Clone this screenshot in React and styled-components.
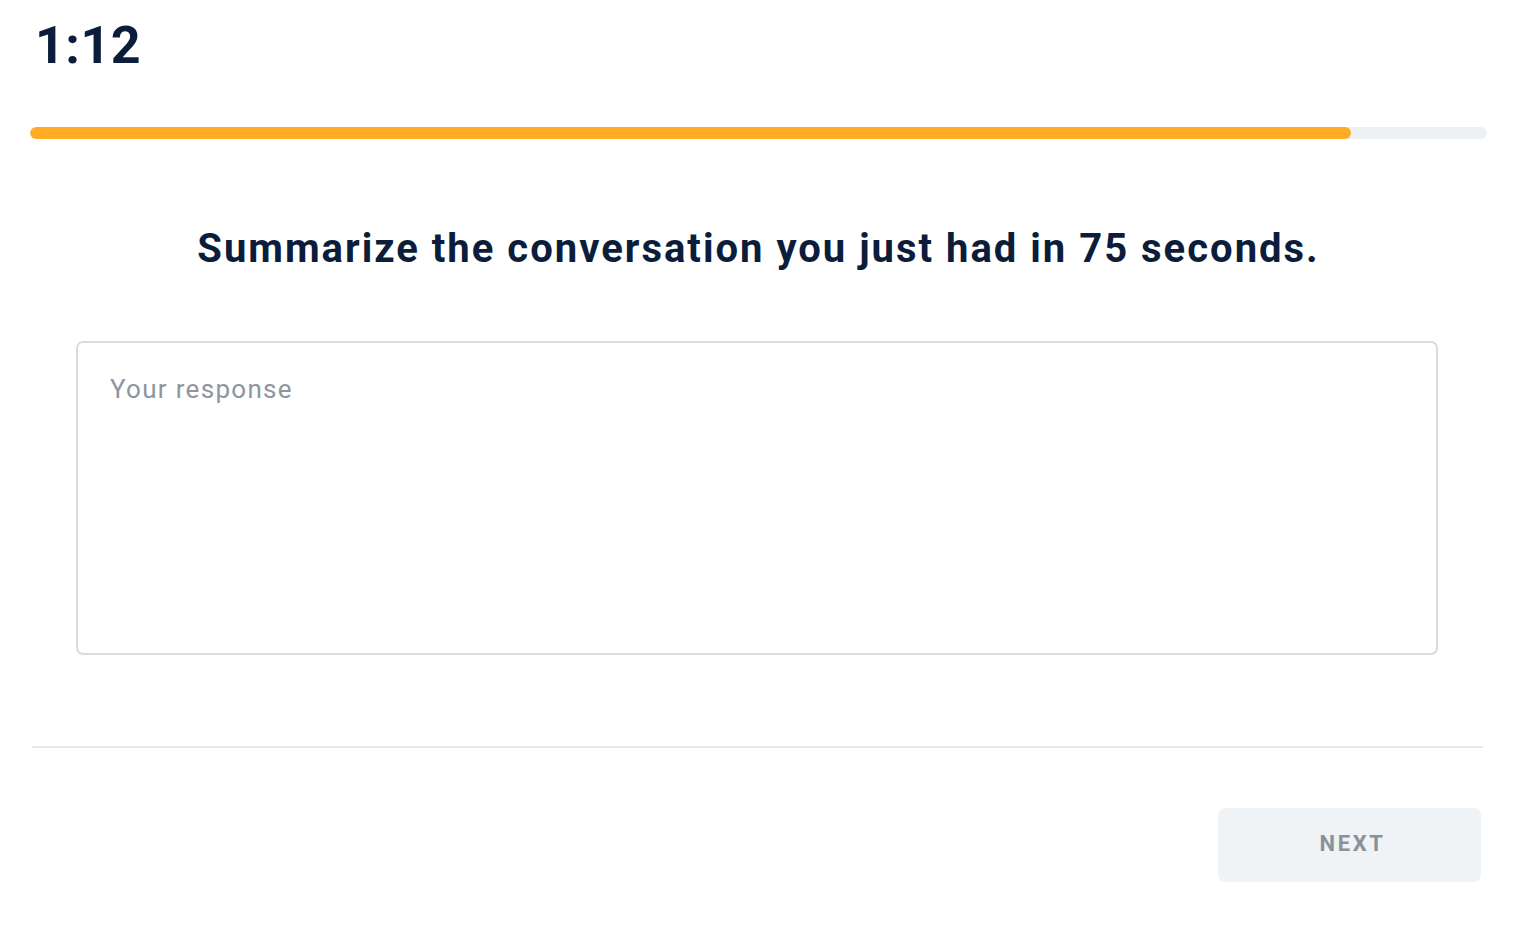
import React, { useState } from "react";
import styled, { createGlobalStyle } from "styled-components";

const GlobalStyle = createGlobalStyle`
  html, body {
    margin: 0;
    padding: 0;
    background: #ffffff;
    font-family: Roboto, "Liberation Sans", sans-serif;
  }
`;

const Page = styled.div`
  width: 1457px;
  padding: 16px 0 0 30px;
  display: flex;
  flex-direction: column;
`;

const Timer = styled.div`
  font-size: 52px;
  font-weight: 700;
  color: #0c1d3b;
  padding-left: 5px;
  line-height: 60px;
  letter-spacing: 0.5px;
`;

const Track = styled.div`
  margin-top: 51px;
  height: 12px;
  border-radius: 6px;
  background: #eef1f4;
  overflow: hidden;
`;

const Fill = styled.div`
  height: 100%;
  border-radius: 6px;
  background: #ffab24;
`;

const Prompt = styled.h1`
  margin: 86px 0 0;
  text-align: center;
  font-size: 40px;
  font-weight: 700;
  color: #0c1d3b;
  letter-spacing: 2px;
  line-height: 48px;
`;

const Response = styled.textarea`
  margin: 68px 0 0 46px;
  width: 1362px;
  height: 314px;
  box-sizing: border-box;
  border: 2px solid #d8dbdf;
  border-radius: 7px;
  padding: 31px 32px;
  font-family: inherit;
  font-size: 26px;
  color: #0c1d3b;
  resize: none;
  outline: none;
  letter-spacing: 1.3px;

  &::placeholder {
    color: #8e959e;
  }
`;

const Divider = styled.hr`
  margin: 91px 0 0 2px;
  width: 1451px;
  border: none;
  height: 2px;
  background: #e6e9ec;
`;

const Footer = styled.div`
  display: flex;
  justify-content: flex-end;
  padding-top: 60px;
  padding-right: 6px;
`;

const NextButton = styled.button`
  width: 263px;
  height: 74px;
  border: none;
  border-radius: 7px;
  background: #f0f3f6;
  color: #8a9199;
  font-family: inherit;
  font-size: 22px;
  font-weight: 700;
  letter-spacing: 2.6px;
  padding: 0 0 3px 6px;
  cursor: not-allowed;
`;

export default function App() {
  const [text, setText] = useState("");
  const progress = (1321 / 1457) * 100;
  return (
    <>
      <GlobalStyle />
      <Page>
        <Timer>1:12</Timer>
        <Track>
          <Fill style={{ width: `${progress}%` }} />
        </Track>
        <Prompt>Summarize the conversation you just had in 75 seconds.</Prompt>
        <Response
          placeholder="Your response"
          value={text}
          onChange={(e) => setText(e.target.value)}
        />
        <Divider />
        <Footer>
          <NextButton disabled={!text}>NEXT</NextButton>
        </Footer>
      </Page>
    </>
  );
}
